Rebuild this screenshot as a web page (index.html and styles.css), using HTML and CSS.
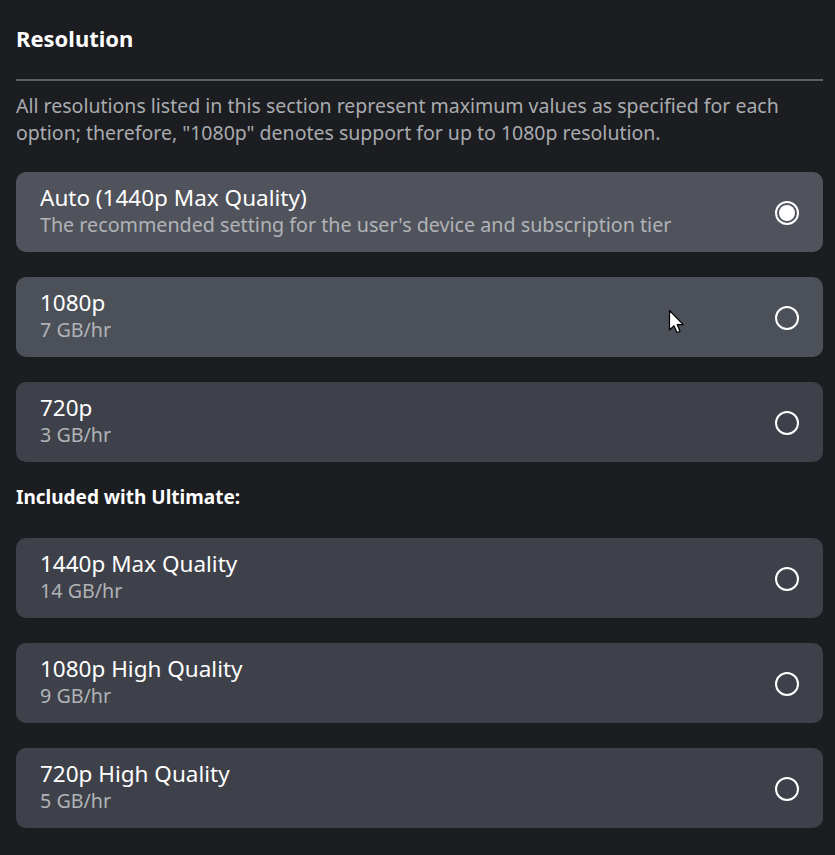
FILE: index.html
```html
<!DOCTYPE html>
<html>
<head>
<meta charset="utf-8">
<link rel="stylesheet" href="styles.css">
</head>
<body>
<div class="page">
  <h2 class="title">Resolution</h2>
  <div class="divider"></div>
  <p class="desc">All resolutions listed in this section represent maximum values as specified for each option; therefore, "1080p" denotes support for up to 1080p resolution.</p>
  <div class="list">
    <div class="card selected">
      <div class="text"><div class="name">Auto (1440p Max Quality)</div><div class="sub">The recommended setting for the user's device and subscription tier</div></div>
      <span class="radio on"></span>
    </div>
    <div class="card hover">
      <div class="text"><div class="name">1080p</div><div class="sub">7 GB/hr</div></div>
      <span class="radio"></span>
      <svg class="cursor" width="20" height="28" viewBox="0 0 20 28"><path d="M1.5 1.5 L1.5 21 L6 16.8 L9 23.5 L12 22.2 L9.2 15.6 L15.2 15.6 Z" fill="#fff" stroke="#000" stroke-width="1.2" stroke-linejoin="round"/></svg>
    </div>
    <div class="card">
      <div class="text"><div class="name">720p</div><div class="sub">3 GB/hr</div></div>
      <span class="radio"></span>
    </div>
  </div>
  <h3 class="group">Included with Ultimate:</h3>
  <div class="list">
    <div class="card">
      <div class="text"><div class="name">1440p Max Quality</div><div class="sub">14 GB/hr</div></div>
      <span class="radio"></span>
    </div>
    <div class="card">
      <div class="text"><div class="name">1080p High Quality</div><div class="sub">9 GB/hr</div></div>
      <span class="radio"></span>
    </div>
    <div class="card">
      <div class="text"><div class="name">720p High Quality</div><div class="sub">5 GB/hr</div></div>
      <span class="radio"></span>
    </div>
  </div>
</div>
</body>
</html>
```
FILE: styles.css
```css
html, body {
  margin: 0;
  padding: 0;
  background: #1c1d21;
}
body {
  font-family: "Noto Sans", "Open Sans", sans-serif;
  color: #ffffff;
}
.page {
  padding: 23px 12px 0 16px;
}
.title {
  margin: 0;
  font-size: 22px;
  font-weight: 700;
  line-height: 30px;
}
.divider {
  height: 2px;
  background: #5f6064;
  margin-top: 26px;
}
.desc {
  margin: 11px 0 0 0;
  font-size: 19.5px;
  line-height: 27px;
  color: #a9abaf;
}
.list {
  display: flex;
  flex-direction: column;
  gap: 25px;
}
.desc + .list {
  margin-top: 26px;
}
.card {
  position: relative;
  height: 80px;
  box-sizing: border-box;
  border-radius: 10px;
  background: #3e4149;
  display: flex;
  align-items: center;
  justify-content: space-between;
  padding: 0 24px 0 24px;
}
.card.selected { background: #50535b; }
.card.hover { background: #4c5058; }
.text {
  display: flex;
  flex-direction: column;
}
.name {
  font-size: 22.5px;
  line-height: 26px;
  color: #ffffff;
}
.sub {
  font-size: 19.7px;
  line-height: 28px;
  color: #b1b3b7;
}
.radio {
  width: 20px;
  height: 20px;
  border: 2px solid #ffffff;
  border-radius: 50%;
  position: relative;
  flex: none;
  margin-top: 1px;
}
.radio.on::after {
  content: "";
  position: absolute;
  left: 2px;
  top: 2px;
  width: 16px;
  height: 16px;
  border-radius: 50%;
  background: #ffffff;
}
.cursor {
  position: absolute;
  left: 652px;
  top: 32px;
}
.group {
  margin: 22px 0 0 0;
  font-size: 19px;
  font-weight: 700;
  line-height: 26px;
}
.group + .list {
  margin-top: 28px;
}
```
